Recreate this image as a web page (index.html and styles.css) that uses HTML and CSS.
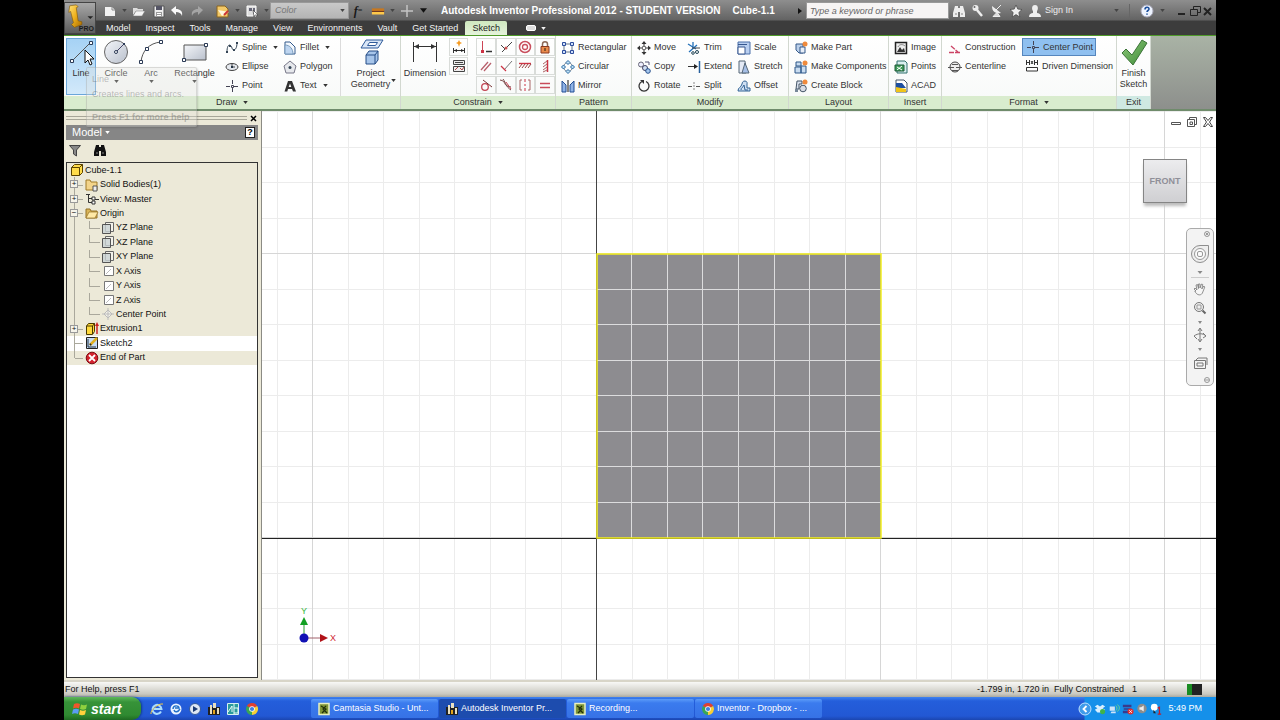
FILE: index.html
```html
<!DOCTYPE html>
<html lang="en">
<head>
<meta charset="utf-8">
<title>Autodesk Inventor Professional 2012</title>
<link rel="stylesheet" href="styles.css">
</head>
<body>
<svg class="sprite" aria-hidden="true">
  <defs>
    <linearGradient id="gold" x1="0" y1="0" x2="1" y2="1"><stop offset="0" stop-color="#ffe27a"/><stop offset=".5" stop-color="#eeb01c"/><stop offset="1" stop-color="#a86a00"/></linearGradient>
    <linearGradient id="steel" x1="0" y1="0" x2="1" y2="1"><stop offset="0" stop-color="#f4f6fa"/><stop offset="1" stop-color="#b9c0cc"/></linearGradient>
    <linearGradient id="leaf" x1="0" y1="0" x2="1" y2="1"><stop offset="0" stop-color="#8fca7c"/><stop offset="1" stop-color="#3c8a35"/></linearGradient>
  </defs>
  <symbol id="drop" viewBox="0 0 6 4"><path d="M0 0h6L3 4z" fill="currentColor"/></symbol>
  <symbol id="new" viewBox="0 0 14 14"><path d="M2 3h7l3 3v6H2z" fill="#f2f2f2"/><path d="M9 3v3h3" fill="none" stroke="#888"/></symbol>
  <symbol id="open" viewBox="0 0 14 14"><path d="M1 11V4h4l1 1h5v2H4z" fill="#ddd"/><path d="M4 7h9l-3 5H1z" fill="#f4f4f4" stroke="#777" stroke-width=".5"/></symbol>
  <symbol id="save" viewBox="0 0 14 14"><path d="M2 2h10v11H2z" fill="#eee" stroke="#555"/><path d="M4 2h6v4H4z" fill="#556"/><path d="M4 8h6v5H4z" fill="#999"/><path d="M5 9.500h4M5 11.500h4" stroke="#fff"/></symbol>
  <symbol id="undo" viewBox="0 0 14 14"><path d="M1 6l5-4v3c4 0 7 2 6 7-1-3-3-4-6-4v3z" fill="#fafafa"/></symbol>
  <symbol id="redo" viewBox="0 0 14 14"><path d="M13 6L8 2v3c-4 0-7 2-6 7 1-3 3-4 6-4v3z" fill="#a5a5a5"/></symbol>
  <symbol id="return" viewBox="0 0 14 14"><path d="M1 2h8l3 3v8H1z" fill="#f3c968" stroke="#8a6420"/><path d="M2 6l4 6 7-4" fill="#fff6dd"/><path d="M8 11l4-4" stroke="#c33" stroke-width="2"/></symbol>
  <symbol id="docsel" viewBox="0 0 14 14"><path d="M2 2h9v10H2z" fill="#ddd" stroke="#fff"/><path d="M4 4h3v3H4zM8 4h2v6H8z" fill="#667"/><path d="M8 6l5 5-3 0-1 2z" fill="#fff" stroke="#333" stroke-width=".6"/></symbol>
  <symbol id="ruler" viewBox="0 0 16 14"><path d="M1 4h14v3H1z" fill="#c8781f"/><path d="M1 8h14v3H1z" fill="#ffc94a"/><path d="M1 7.500h14" stroke="#6b2c12"/></symbol>
  <symbol id="plus" viewBox="0 0 14 14"><path d="M7 1v12M1 7h12" stroke="#c4c4c4" stroke-width="1.500"/></symbol>
  <symbol id="binoc" viewBox="0 0 14 14"><path d="M3 2h3v2h2V2h3l2 7v4H8V8H6v5H1V9z" fill="currentColor"/><path d="M3 10h2M9 10h2" stroke="#888"/></symbol>
  <symbol id="key" viewBox="0 0 14 14"><circle cx="4.500" cy="4" r="3" fill="#eee"/><circle cx="3.500" cy="3" r="1" fill="#666"/><path d="M6 6l5 6" stroke="#eee" stroke-width="2.500"/></symbol>
  <symbol id="dish" viewBox="0 0 14 14"><path d="M2 2c0 6 4 8 9 7z" fill="#eee"/><path d="M6 6l5-5M3 12.500h7l-3-4z" stroke="#eee" fill="#ddd"/></symbol>
  <symbol id="star" viewBox="0 0 14 14"><path d="M7 1l1.800 4.100 4.200.4-3.200 3 1 4.500L7 10.600 3.200 13l1-4.500L1 5.500l4.200-.4z" fill="#eee" stroke="#444" stroke-width=".7"/></symbol>
  <symbol id="user" viewBox="0 0 14 14"><path d="M7 1c4 0 3 5 2 6v2c2 0 4 1 4 4H1c0-3 2-4 4-4V7C4 6 3 1 7 1z" fill="#eee"/></symbol>
  <symbol id="help" viewBox="0 0 14 14"><circle cx="7" cy="7" r="6" fill="#eef4ff" stroke="#aab"/><path d="M5 5.500c0-3 4-3 4-.5 0 1.500-2 1.500-2 3M7 9.500v1.300" fill="none" stroke="#1b4f9c" stroke-width="1.600"/></symbol>
  <symbol id="line" viewBox="0 0 28 28"><path d="M5 23L22 6" stroke="#555" fill="none"/><path d="M3.500 21.500h3v3h-3zM22.500 3.500h3v3h-3z" fill="#fff" stroke="#2b3a55"/></symbol>
  <symbol id="circle" viewBox="0 0 28 28"><circle cx="14" cy="14" r="11.500" fill="url(#steel)" stroke="#666"/><path d="M14 14l8-8" stroke="#446"/><circle cx="14" cy="14" r="1.500" fill="#fff" stroke="#2b3a55"/><path d="M21 5h2v2h-2z" fill="#2b3a55"/></symbol>
  <symbol id="arc" viewBox="0 0 28 28"><path d="M4 24C5 13 12 5 24 4" fill="none" stroke="#555"/><path d="M2.500 22.500h3v3h-3zM22.500 2.500h3v3h-3zM8.500 9.500h3v3h-3z" fill="#fff" stroke="#2b3a55"/></symbol>
  <symbol id="rect" viewBox="0 0 28 28"><path d="M3 7h22v15H3z" fill="url(#steel)" stroke="#555"/><path d="M1.500 20.500h3v3h-3zM23.500 5.500h3v3h-3z" fill="#fff" stroke="#2b3a55"/></symbol>
  <symbol id="spline" viewBox="0 0 14 14"><path d="M2 11c0-9 4-8 5-4s5 2 5-5" fill="none" stroke="#345"/><path d="M1 10h2v2H1zM4 4h2v2H4zM8 8h2v2H8zM11 1h2v2h-2z" fill="#345"/></symbol>
  <symbol id="ellipse" viewBox="0 0 14 14"><ellipse cx="7" cy="7" rx="6" ry="3.500" fill="#e5e9ef" stroke="#444"/><path d="M7 3.500V7h3" stroke="#444" fill="none"/><path d="M6 6h2v2H6z" fill="#234"/></symbol>
  <symbol id="point" viewBox="0 0 14 14"><path d="M7.500 1v4M7.500 9v4M1 7.500h4M9 7.500h4M6.500 6.500h2v2h-2z" stroke="#445" fill="none"/></symbol>
  <symbol id="fillet" viewBox="0 0 14 14"><path d="M2 1h5l5 5v7H2z" fill="#f4f8fd" stroke="#345a8c"/><path d="M2 4c5 0 8 4 8 9H2z" fill="#bed5f0" stroke="#7799bb"/></symbol>
  <symbol id="polygon" viewBox="0 0 14 14"><path d="M7 1l6 5-2 7H3L1 6z" fill="#e6e8ec" stroke="#778"/><circle cx="7" cy="7.500" r="1.500" fill="#345"/></symbol>
  <symbol id="text" viewBox="0 0 14 14"><path d="M5 2h4l4 10.500h-3L9 10H5l-.7 2.500H1.500zM7 4.500L5.700 8h2.600z" fill="#333"/></symbol>
  <symbol id="project" viewBox="0 0 28 28"><path d="M9 2h17l-5 8H4z" fill="#d9e6f7" stroke="#2f5b9a"/><path d="M12.500 4.500h8l-2 3h-8z" fill="#fff" stroke="#2f5b9a"/><path d="M9 17l3-4h9v9l-3 4H9z" fill="#a7c5ea" stroke="#254c86"/><path d="M9 17h9v9M18 17l3-4" fill="none" stroke="#254c86"/></symbol>
  <symbol id="dimension" viewBox="0 0 28 28"><path d="M2.500 4v20M25.500 4v20M3 8.500h22" stroke="#333" fill="none"/><path d="M3 8.500l5-2.500v5zM25 8.500L20 6v5z" fill="#333"/></symbol>
  <symbol id="autodim" viewBox="0 0 14 14"><path d="M1.500 8v5M12.500 8v5M2 10.500h10" stroke="#333"/><path d="M2 10.500L5 9v3zM12 10.500L9 9v3z" fill="#222"/><path d="M7 0l1 2 2 1-2 1-1 3-1-3-2-1 2-1z" fill="#f59b22"/></symbol>
  <symbol id="showcon" viewBox="0 0 14 14"><path d="M1.500 1.500h11v4h-11zM1.500 7.500h11v5h-11z" fill="#eee" stroke="#444"/><path d="M3 3.500h8" stroke="#444"/><path d="M3 11l3-3M8 9l2 2 2-3" stroke="#a44" fill="none"/></symbol>
  <symbol id="c1" viewBox="0 0 14 14"><path d="M3.500 1v11" stroke="#cc4455"/><path d="M7 11.500h6" stroke="#333" stroke-width="1.500"/><path d="M2 10h3v3H2z" fill="#c34"/></symbol>
  <symbol id="c2" viewBox="0 0 14 14"><path d="M2 5l4 4M3 12l4-4M8 7l5-5" stroke="#444"/><circle cx="7" cy="8" r="1.500" fill="#c55"/></symbol>
  <symbol id="c3" viewBox="0 0 14 14"><circle cx="7" cy="7" r="5.500" fill="none" stroke="#c9505e" stroke-width="1.500"/><circle cx="7" cy="7" r="2.500" fill="none" stroke="#c9505e" stroke-width="1.300"/></symbol>
  <symbol id="c4" viewBox="0 0 14 14"><path d="M4.500 7V4c0-3 5-3 5 0v3" fill="none" stroke="#8d6a58" stroke-width="1.500"/><path d="M3 6.500h8V13H3z" fill="#e98a4c" stroke="#8b3b20"/><path d="M7 8v3" stroke="#642" stroke-width="1.500"/></symbol>
  <symbol id="c5" viewBox="0 0 14 14"><path d="M2 11L9 3M5 12l7-8" stroke="#b8606c" stroke-width="1.300"/></symbol>
  <symbol id="c6" viewBox="0 0 14 14"><path d="M5 11l8-9" fill="none" stroke="#777"/><path d="M2 7l5 5" stroke="#c34" stroke-width="1.300"/></symbol>
  <symbol id="c7" viewBox="0 0 14 14"><path d="M1 4.500h12" stroke="#c34" stroke-width="1.400"/><path d="M1 9l3-4M4 9l3-4M7 9l3-4M10 9l3-4" fill="none" stroke="#944"/></symbol>
  <symbol id="c8" viewBox="0 0 14 14"><path d="M9.500 1v12" stroke="#c34" stroke-width="1.500"/><path d="M9 2L5 5M9 5L5 8M9 8l-4 3M9 11l-4 2" fill="none" stroke="#a66"/></symbol>
  <symbol id="c9" viewBox="0 0 14 14"><circle cx="6" cy="9" r="3.300" fill="none" stroke="#c24452" stroke-width="1.300"/><path d="M4 2l9 7" stroke="#733"/></symbol>
  <symbol id="c10" viewBox="0 0 14 14"><path d="M1 2c7 1 2 6 11 7M4 1c3 4 3 8 8 11" fill="none" stroke="#744"/><path d="M7 4l5 7" stroke="#c45"/></symbol>
  <symbol id="c11" viewBox="0 0 14 14"><path d="M4 2H2v10h2M10 2h2v10h-2" fill="none" stroke="#a66"/><path d="M7 1v3M7 6v2M7 10v3" stroke="#c34"/></symbol>
  <symbol id="c12" viewBox="0 0 14 14"><path d="M2 5.500h10M2 9.500h10" stroke="#c84b5a" stroke-width="1.300"/></symbol>
  <symbol id="prect" viewBox="0 0 14 14"><path d="M3 3h8v8H3z" fill="none" stroke="#678"/><path d="M1.500 1.500h3v3h-3zM9.500 1.500h3v3h-3zM1.500 9.500h3v3h-3zM9.500 9.500h3v3h-3z" fill="#cfe0fb" stroke="#2c4c9c"/></symbol>
  <symbol id="pcirc" viewBox="0 0 14 14"><circle cx="7" cy="7" r="4.500" fill="none" stroke="#789"/><path d="M7 .5l2 2-2 2-2-2zM7 9.500l2 2-2 2-2-2zM2.500 5l2 2-2 2-2-2zM11.500 5l2 2-2 2-2-2z" fill="#bfe1f5" stroke="#2766a0"/></symbol>
  <symbol id="mirror" viewBox="0 0 14 14"><path d="M1 2l4 4v7H1zM13 2L9 6v7h4z" fill="#8fb3e6" stroke="#234f94"/><path d="M7 1v12" stroke="#111"/></symbol>
  <symbol id="move" viewBox="0 0 14 14"><path d="M7 2v10M2 7h10" stroke="#333"/><path d="M7 0l2.500 3h-5zM7 14l2.500-3h-5zM0 7l3-2.500v5zM14 7l-3-2.500v5z" fill="#333"/><path d="M5.500 5.500h3v3h-3z" fill="#fff" stroke="#333" stroke-width=".6"/></symbol>
  <symbol id="copy" viewBox="0 0 14 14"><circle cx="4" cy="4.500" r="2.500" fill="#eef" stroke="#667"/><circle cx="8" cy="8" r="2.500" fill="#cfe0f5" stroke="#446"/><circle cx="11" cy="11" r="2.300" fill="#a8c9ef" stroke="#26508c"/><path d="M8 2h4v3" fill="none" stroke="#557"/></symbol>
  <symbol id="rotate" viewBox="0 0 14 14"><path d="M5 2.500a5 5 0 1 0 4 0" fill="none" stroke="#333" stroke-width="1.300"/><path d="M3 1h4v4z" fill="#333"/></symbol>
  <symbol id="trim" viewBox="0 0 14 14"><path d="M1 3l8 5M2 11l8-7M6 1v7" stroke="#2370b8" stroke-width="1.300"/><path d="M5 7h8" stroke="#444"/><circle cx="10" cy="11" r="1.500" fill="none" stroke="#245"/><circle cx="6" cy="12" r="1.300" fill="none" stroke="#245"/></symbol>
  <symbol id="extend" viewBox="0 0 14 14"><path d="M1 6.500h8" stroke="#333"/><path d="M7 4l4 2.500L7 9z" fill="#222"/><path d="M12.500 1v12" stroke="#27609d" stroke-width="1.500"/></symbol>
  <symbol id="split" viewBox="0 0 14 14"><path d="M1 7.500h4M9 7.500h4" stroke="#555"/><path d="M7 3v9" stroke="#888" stroke-dasharray="2 1"/></symbol>
  <symbol id="scale" viewBox="0 0 14 14"><path d="M1 1h12v12H1z" fill="#b9cff0" stroke="#4b6fa8"/><path d="M1 6h7v7H1z" fill="#fff" stroke="#36578e"/><path d="M1 3.500h9" stroke="#36578e"/></symbol>
  <symbol id="stretch" viewBox="0 0 14 14"><path d="M2 1h6l1 12H2z" fill="#e4eaf5" stroke="#567"/><path d="M8 3l4 10H5z" fill="#a6bfe6" stroke="#567"/></symbol>
  <symbol id="offset" viewBox="0 0 14 14"><path d="M1 12c0-4 3-3 4-7 0-4 6-4 5 0l0 4h3v3z" fill="#cfe0f3" stroke="#316294"/><path d="M4 11c0-3 2-2 3-5l1 5h3" fill="none" stroke="#316294"/></symbol>
  <symbol id="mkpart" viewBox="0 0 14 14"><path d="M2 3h7v9H5L2 9z" fill="#bcd0ea" stroke="#355989"/><path d="M6 6h5v6H6z" fill="#e7eef8" stroke="#355989"/><circle cx="11" cy="3" r="2.500" fill="#ef8a3c"/></symbol>
  <symbol id="mkcomp" viewBox="0 0 14 14"><path d="M2 2h5v4H2zM1 7h6v6H1zM7 6h5v7H7z" fill="#c9dcf0" stroke="#2d5688"/><circle cx="11" cy="3" r="2.500" fill="#ef8a3c"/></symbol>
  <symbol id="block" viewBox="0 0 14 14"><path d="M3 2h5v3H5v5H2z" fill="#d8e0ec" stroke="#456"/><circle cx="9" cy="9.500" r="3.300" fill="#d9dde6" stroke="#456"/><path d="M1 10h3v3H1z" fill="#789"/><circle cx="11" cy="3" r="2.500" fill="#ef8a3c"/></symbol>
  <symbol id="image" viewBox="0 0 14 14"><path d="M1.500 1.500h11v11h-11z" fill="#eee" stroke="#222" stroke-width="1.500"/><path d="M3 11l3-5 2 3 2-2 1 4z" fill="#333"/><path d="M4 6c1-3 5-3 7-1" fill="none" stroke="#888"/></symbol>
  <symbol id="points" viewBox="0 0 14 14"><path d="M3 1h8l2 2v10H3z" fill="#d9eff0" stroke="#30706c"/><path d="M1 5h9v6H1z" fill="#3f9b5a" stroke="#1f5a38"/><path d="M3 7l5 3M8 6l-5 4" stroke="#fff"/></symbol>
  <symbol id="acad" viewBox="0 0 14 14"><path d="M2 1h8l3 3v9H2z" fill="#fff" stroke="#456"/><path d="M2 4h6l4 5H2z" fill="#1d4fa0"/><path d="M2 8l10 2v3H2z" fill="#f0c419"/></symbol>
  <symbol id="constr" viewBox="0 0 14 14"><path d="M1 11.500h12M3 5l7 6" stroke="#c46" stroke-width="1.300" stroke-dasharray="5 1"/></symbol>
  <symbol id="cline" viewBox="0 0 14 14"><circle cx="7" cy="7" r="5" fill="#eee" stroke="#444"/><path d="M0 7.500h6M8 7.500h6M4 4.500h6M4 10.500h6" stroke="#555"/></symbol>
  <symbol id="driven" viewBox="0 0 14 14"><path d="M1.500 1v5M4.500 1v5M2 3.500h2M6 2l2 3M8 2L6 5M9.500 1v5M12.500 1v5M10 3.500h2" stroke="#333" fill="none"/><path d="M1.500 12V8.500h11V12z" fill="#fff" stroke="#333"/></symbol>
  <symbol id="tick" viewBox="0 0 28 28"><path d="M2 15l4-4 6 6L22 2l5 3-14 22z" fill="url(#leaf)" stroke="#3c7438"/></symbol>
  <symbol id="part" viewBox="0 0 14 14"><path d="M1.500 4.500l3-3h8v8l-3 3h-8z" fill="#ffdc4a" stroke="#5b4300"/><path d="M1.500 4.500h8v8M9.500 4.500l3-3" fill="none" stroke="#5b4300"/></symbol>
  <symbol id="folders" viewBox="0 0 14 14"><path d="M1 2h4l1 2h6v8H1z" fill="#f3d48a" stroke="#a07a28"/><path d="M8 8h4v5H8z" fill="#eee" stroke="#555"/></symbol>
  <symbol id="view" viewBox="0 0 14 14"><path d="M1 2.500h4M3.500 2v8.500H7M3.500 6.500H7" stroke="#333" fill="none"/><path d="M7 5h3v3H7zM7 9h3v3H7z" fill="#fff" stroke="#333"/><path d="M10 7.500h4" stroke="#333"/></symbol>
  <symbol id="folder" viewBox="0 0 14 14"><path d="M1 3h4l1 2h6v7H1z" fill="#d9b458" stroke="#947024"/><path d="M4 6h9l-3 6H1z" fill="#ffe9a6" stroke="#947024" stroke-width=".7"/></symbol>
  <symbol id="plane" viewBox="0 0 14 14"><path d="M4.500 1.500h8v9h-8z" fill="#f3f2ea" stroke="#666"/><path d="M1.500 3.500h8v9h-8z" fill="#c9d2d4" fill-opacity=".8" stroke="#555"/></symbol>
  <symbol id="axis" viewBox="0 0 14 14"><path d="M3.500 2.500h9v9h-9z" fill="#fff" stroke="#777"/><path d="M5 10l5-5" stroke="#bbb"/></symbol>
  <symbol id="cpoint" viewBox="0 0 14 14"><path d="M7 3l4 4-4 4-4-4z" fill="#f4f2ea" stroke="#bbb"/><path d="M7 1v12M1 7h12" stroke="#bbb"/></symbol>
  <symbol id="extr" viewBox="0 0 14 14"><path d="M1.500 4l2-2.500h6v8l-2 3h-6z" fill="#ffd93b" stroke="#4a3a00"/><path d="M1.500 4h6v8M7.500 4l2-2.500" fill="none" stroke="#4a3a00"/><path d="M12 3v9" stroke="#c22" stroke-width="1.500"/><path d="M12 0l2 4h-4z" fill="#c22"/></symbol>
  <symbol id="sketch" viewBox="0 0 14 14"><path d="M1.500 1.500h11v11h-11z" fill="#c6dcf5" stroke="#222"/><path d="M3 3v8h8" fill="none" stroke="#234"/><path d="M5 9l7-7" stroke="#e0b020" stroke-width="2.500"/><path d="M5 9l1-1" stroke="#222" stroke-width="2"/></symbol>
  <symbol id="end" viewBox="0 0 14 14"><circle cx="7" cy="7" r="5.800" fill="#d2232e" stroke="#7d0d14"/><path d="M4 4l6 6M10 4l-6 6" stroke="#fff" stroke-width="1.800"/></symbol>
  <symbol id="funnel" viewBox="0 0 14 14"><path d="M1.500 2.500h11L8.500 7v6l-3-2V7z" fill="#888" stroke="#444"/></symbol>
  <symbol id="camtasia" viewBox="0 0 14 14"><path d="M2 1.500h10v11H2z" fill="#7d9435" stroke="#e8efc0" stroke-width="1.500"/><path d="M4 4l5 3-4 4M9 4L6 7l4 4" fill="none" stroke="#20300a" stroke-width="1.200"/></symbol>
  <symbol id="inventor" viewBox="0 0 14 14"><path d="M1 5h12v8H1z" fill="#222"/><path d="M3 3h2v9H3zM6 1h3v5H6zM10 6h2v6h-2z" fill="#e8dfc0"/><path d="M6 8h2v4H6z" fill="#e2a41c"/></symbol>
  <symbol id="chrome" viewBox="0 0 14 14"><path d="M7 7L1.800 4A6 6 0 0 1 12.200 4z" fill="#e0402e"/><path d="M7 7l5.200-3A6 6 0 0 1 7 13z" fill="#f7cf33"/><path d="M7 7v6A6 6 0 0 1 1.800 4z" fill="#3aa655"/><circle cx="7" cy="7" r="2.800" fill="#fff"/><circle cx="7" cy="7" r="2.100" fill="#3f7fe0"/></symbol>
  <symbol id="ie" viewBox="0 0 14 14"><path d="M11 9.500A4.500 4.500 0 1 1 11.500 7H4" fill="none" stroke="#a9dcff" stroke-width="2"/><path d="M1 12C0 9 8 1 13 2" fill="none" stroke="#f5c842"/></symbol>
  <symbol id="outlook" viewBox="0 0 14 14"><circle cx="7" cy="7" r="5.500" fill="#e9f2ff"/><path d="M4 7c0-4 6-4 6-1H6m-1 2c1 3 4 2 6-1" fill="none" stroke="#2470c8" stroke-width="1.400"/></symbol>
  <symbol id="media" viewBox="0 0 14 14"><circle cx="7" cy="7" r="5.500" fill="#dfe8f4" stroke="#345a9c"/><path d="M5 4l5 3-5 3z" fill="#1c3b74"/></symbol>
  <symbol id="graph" viewBox="0 0 14 14"><path d="M1.500 1.500h11v11h-11z" fill="#2a9b9b" stroke="#d6f0ee"/><path d="M2 10L6 4v6M8 2v10M8 6h4v5H8" fill="none" stroke="#eafcf8"/></symbol>
  <symbol id="winlogo" viewBox="0 0 16 16"><path d="M2 3c2-1 4-1 6 0L7 7.500c-2-1-4-1-6 0z" fill="#f0562b"/><path d="M9 3.500c2 1 4 1 6 0L14 8c-2 1-4 1-6 0z" fill="#8fd13f"/><path d="M1 8.500c2-1 4-1 6 0L6 13c-2-1-4-1-6 0z" fill="#5b9cf5"/><path d="M8 9c2 1 4 1 6 0l-1 4.500c-2 1-4 1-6 0z" fill="#ffd23c"/></symbol>
</svg>

<div class="app">
  <header class="head">
    <button class="logo" aria-label="Application menu">
      <svg viewBox="0 0 32 32"><path d="M5 3l7-1 2 2-2 1 2 14 4 1v3l-8 3-3-3 2-2-3-12-2 1z" fill="url(#gold)" stroke="#7c5200" stroke-width=".6"/><path d="M24 14h6l-3 3z" fill="#222"/></svg>
      <span>PRO</span>
    </button>
    <div class="head-rows">
      <div class="titlebar">
        <div class="quick">
          <button class="q22" aria-label="New"><svg><use href="#new"/></svg></button>
          <button class="q7" aria-label="New options"><svg class="dr"><use href="#drop"/></svg></button>
          <button class="q22" aria-label="Open"><svg><use href="#open"/></svg></button>
          <button class="q18" aria-label="Save"><svg><use href="#save"/></svg></button>
          <button class="q18" aria-label="Undo"><svg><use href="#undo"/></svg></button>
          <button class="q22" aria-label="Redo"><svg><use href="#redo"/></svg></button>
          <button class="q22 group" aria-label="Return"><svg><use href="#return"/></svg></button>
          <button class="q7" aria-label="Return options"><svg class="dr"><use href="#drop"/></svg></button>
          <button class="q22" aria-label="Select"><svg><use href="#docsel"/></svg></button>
          <button class="q7" aria-label="Select options"><svg class="dr"><use href="#drop"/></svg></button>
          <span class="color-wrap"><select class="color" aria-label="Color"><option>Color</option></select><svg class="dr"><use href="#drop"/></svg></span>
          <button class="q18 fx" aria-label="Parameters">f<sub>=</sub></button>
          <button class="q22" aria-label="Measure"><svg><use href="#ruler"/></svg></button>
          <button class="q7" aria-label="Measure options"><svg class="dr"><use href="#drop"/></svg></button>
          <button class="q22" aria-label="Add"><svg><use href="#plus"/></svg></button>
          <button class="q7 more" aria-label="Customize"><svg class="dr"><use href="#drop"/></svg></button>
        </div>
        <h1 class="title">Autodesk Inventor Professional 2012 - STUDENT VERSION</h1>
        <span class="title">Cube-1.1</span>
        <div class="info">
          <span class="play"></span>
          <input class="search" type="text" placeholder="Type a keyword or phrase" aria-label="Search">
          <button aria-label="Search"><svg><use href="#binoc"/></svg></button>
          <button aria-label="Key"><svg><use href="#key"/></svg></button>
          <button aria-label="Communication"><svg><use href="#dish"/></svg></button>
          <button aria-label="Favorites"><svg><use href="#star"/></svg></button>
          <button aria-label="Account"><svg><use href="#user"/></svg></button>
          <button class="signin">Sign In<svg class="dr"><use href="#drop"/></svg></button>
          <button class="helpb" aria-label="Help"><svg><use href="#help"/></svg><svg class="dr"><use href="#drop"/></svg></button>
          <button class="win" aria-label="Minimize"><svg viewBox="0 0 12 12"><path d="M2 9h7" stroke="#222" stroke-width="2"/></svg></button>
          <button class="win" aria-label="Restore"><svg viewBox="0 0 12 12"><path d="M4.500 4V1.500h7v6H9M1.500 4.500h7v6h-7z" fill="none" stroke="#222"/></svg></button>
          <button class="win" aria-label="Close"><svg viewBox="0 0 12 12"><path d="M2 3l7 7M9 3l-7 7" stroke="#222" stroke-width="2"/></svg></button>
        </div>
      </div>
      <nav class="tabs">
        <button>Model</button><button>Inspect</button><button>Tools</button><button>Manage</button><button>View</button><button>Environments</button><button>Vault</button><button>Get Started</button><button class="on">Sketch</button>
        <button class="rib" aria-label="Ribbon display"><i></i><svg class="dr"><use href="#drop"/></svg></button>
      </nav>
    </div>
  </header>

  <section class="ribbon">
    <div class="panel draw">
      <div class="tools">
        <button class="big sel"><svg><use href="#line"/></svg>Line</button>
        <button class="big w40"><svg><use href="#circle"/></svg>Circle<svg class="dr"><use href="#drop"/></svg></button>
        <button class="big w30"><svg><use href="#arc"/></svg>Arc<svg class="dr"><use href="#drop"/></svg></button>
        <button class="big w56"><svg><use href="#rect"/></svg>Rectangle<svg class="dr"><use href="#drop"/></svg></button>
        <div class="list w58">
          <button><svg><use href="#spline"/></svg>Spline<svg class="dr"><use href="#drop"/></svg></button>
          <button><svg><use href="#ellipse"/></svg>Ellipse</button>
          <button><svg><use href="#point"/></svg>Point</button>
        </div>
        <div class="list w56">
          <button><svg><use href="#fillet"/></svg>Fillet<svg class="dr"><use href="#drop"/></svg></button>
          <button><svg><use href="#polygon"/></svg>Polygon</button>
          <button><svg><use href="#text"/></svg>Text<svg class="dr"><use href="#drop"/></svg></button>
        </div>
        <button class="big project"><svg><use href="#project"/></svg>Project Geometry<svg class="dr"><use href="#drop"/></svg></button>
      </div>
      <h2>Draw <svg class="dr"><use href="#drop"/></svg></h2>
      <div class="ghost"><p>Line</p><p>Creates lines and arcs.</p><p class="f1">Press F1 for more help</p></div>
      <svg class="pointer" viewBox="0 0 12 18"><path d="M1 1v13l3-3 2 5 2-1-2-5h4z" fill="#fff" stroke="#111"/></svg>
    </div>
    <div class="panel constrain">
      <div class="tools">
        <button class="big dim"><svg><use href="#dimension"/></svg>Dimension</button>
        <div class="boxes one">
          <button aria-label="Automatic dimension"><svg><use href="#autodim"/></svg></button>
          <button aria-label="Show constraints"><svg><use href="#showcon"/></svg></button>
        </div>
        <div class="boxes four">
          <button aria-label="Coincident"><svg><use href="#c1"/></svg></button>
          <button aria-label="Collinear"><svg><use href="#c2"/></svg></button>
          <button aria-label="Concentric"><svg><use href="#c3"/></svg></button>
          <button aria-label="Fix"><svg><use href="#c4"/></svg></button>
          <button aria-label="Parallel"><svg><use href="#c5"/></svg></button>
          <button aria-label="Perpendicular"><svg><use href="#c6"/></svg></button>
          <button aria-label="Horizontal"><svg><use href="#c7"/></svg></button>
          <button aria-label="Vertical"><svg><use href="#c8"/></svg></button>
          <button aria-label="Tangent"><svg><use href="#c9"/></svg></button>
          <button aria-label="Smooth"><svg><use href="#c10"/></svg></button>
          <button aria-label="Symmetric"><svg><use href="#c11"/></svg></button>
          <button aria-label="Equal"><svg><use href="#c12"/></svg></button>
        </div>
      </div>
      <h2>Constrain <svg class="dr"><use href="#drop"/></svg></h2>
    </div>
    <div class="panel pattern">
      <div class="tools"><div class="list">
        <button><svg><use href="#prect"/></svg>Rectangular</button>
        <button><svg><use href="#pcirc"/></svg>Circular</button>
        <button><svg><use href="#mirror"/></svg>Mirror</button>
      </div></div>
      <h2>Pattern</h2>
    </div>
    <div class="panel modify">
      <div class="tools">
        <div class="list w50">
          <button><svg><use href="#move"/></svg>Move</button>
          <button><svg><use href="#copy"/></svg>Copy</button>
          <button><svg><use href="#rotate"/></svg>Rotate</button>
        </div>
        <div class="list w50">
          <button><svg><use href="#trim"/></svg>Trim</button>
          <button><svg><use href="#extend"/></svg>Extend</button>
          <button><svg><use href="#split"/></svg>Split</button>
        </div>
        <div class="list">
          <button><svg><use href="#scale"/></svg>Scale</button>
          <button><svg><use href="#stretch"/></svg>Stretch</button>
          <button><svg><use href="#offset"/></svg>Offset</button>
        </div>
      </div>
      <h2>Modify</h2>
    </div>
    <div class="panel layout">
      <div class="tools"><div class="list">
        <button><svg><use href="#mkpart"/></svg>Make Part</button>
        <button><svg><use href="#mkcomp"/></svg>Make Components</button>
        <button><svg><use href="#block"/></svg>Create Block</button>
      </div></div>
      <h2>Layout</h2>
    </div>
    <div class="panel insert">
      <div class="tools"><div class="list">
        <button><svg><use href="#image"/></svg>Image</button>
        <button><svg><use href="#points"/></svg>Points</button>
        <button><svg><use href="#acad"/></svg>ACAD</button>
      </div></div>
      <h2>Insert</h2>
    </div>
    <div class="panel format">
      <div class="tools">
        <div class="list w74">
          <button><svg><use href="#constr"/></svg>Construction</button>
          <button><svg><use href="#cline"/></svg>Centerline</button>
        </div>
        <div class="list">
          <button class="active"><svg><use href="#point"/></svg>Center Point</button>
          <button class="in"><svg><use href="#driven"/></svg>Driven Dimension</button>
        </div>
      </div>
      <h2>Format <svg class="dr"><use href="#drop"/></svg></h2>
    </div>
    <div class="panel exit">
      <div class="tools"><button class="big"><svg><use href="#tick"/></svg>Finish Sketch</button></div>
      <h2>Exit</h2>
    </div>
  </section>

  <main class="work">
    <aside class="browser">
      <div class="grip"><i></i><button aria-label="Close browser"><svg viewBox="0 0 8 8"><path d="M1 2l5 5M6 2L1 7" stroke="#000" stroke-width="1.500"/></svg></button></div>
      <div class="bhead"><button>Model<svg class="dr"><use href="#drop"/></svg></button><button class="bhelp">?</button></div>
      <div class="bbar"><button aria-label="Filter"><svg><use href="#funnel"/></svg></button><button aria-label="Find"><svg><use href="#binoc"/></svg></button></div>
      <div class="tree">
        <ul>
          <li class="l0"><svg><use href="#part"/></svg>Cube-1.1</li>
          <li class="l1"><b>+</b><svg><use href="#folders"/></svg>Solid Bodies(1)</li>
          <li class="l1"><b>+</b><svg><use href="#view"/></svg>View: Master</li>
          <li class="l1"><b>−</b><svg><use href="#folder"/></svg>Origin</li>
          <li class="l2"><svg><use href="#plane"/></svg>YZ Plane</li>
          <li class="l2"><svg><use href="#plane"/></svg>XZ Plane</li>
          <li class="l2"><svg><use href="#plane"/></svg>XY Plane</li>
          <li class="l2"><svg><use href="#axis"/></svg>X Axis</li>
          <li class="l2"><svg><use href="#axis"/></svg>Y Axis</li>
          <li class="l2"><svg><use href="#axis"/></svg>Z Axis</li>
          <li class="l2 last"><svg><use href="#cpoint"/></svg>Center Point</li>
          <li class="l1"><b>+</b><svg><use href="#extr"/></svg>Extrusion1</li>
          <li class="l1 cur"><svg><use href="#sketch"/></svg>Sketch2</li>
          <li class="l1 last"><svg><use href="#end"/></svg>End of Part</li>
        </ul>
      </div>
    </aside>
    <section class="canvas">
      <svg class="scene" viewBox="-477 -285 954 569" preserveAspectRatio="xMidYMid slice">
        <defs>
          <pattern id="minor" x="-143" y="-143" width="71" height="71" patternUnits="userSpaceOnUse"><path d="M.5 0v71M36.500 0v71M0 .5h71M0 36.500h71" stroke="#ececec" fill="none"/></pattern>
          <pattern id="major" x="-143" y="-143" width="284" height="284" patternUnits="userSpaceOnUse"><path d="M.5 0v284M0 .5h284" stroke="#d6d6d6" fill="none"/></pattern>
        </defs>
        <rect x="-600" y="-400" width="1200" height="800" fill="url(#minor)"/>
        <rect x="-600" y="-400" width="1200" height="800" fill="url(#major)"/>
        <path d="M-142.500-400v800" stroke="#444"/>
        <path d="M-600 142.500h1200" stroke="#222"/>
        <path d="M-142-142h284v284h-284z" fill="#8d8c90"/>
        <path d="M-107.500-142v284M-71.500-142v284M-36.500-142v284M-.5-142v284M35.500-142v284M70.500-142v284M106.500-142v284M-142-106.500h284M-142-71.500h284M-142-35.500h284M-142-.5h284M-142 35.500h284M-142 70.500h284M-142 106.500h284" stroke="#dcdcde"/>
        <path d="M-142-142h284v284h-284z" fill="none" stroke="#f4f01c" stroke-width="1.500"/>
      </svg>
      <div class="docwin">
        <button aria-label="Minimize document"><svg viewBox="0 0 12 12"><path d="M1.500 6.500h9v2h-9z" fill="#fff" stroke="#555"/></svg></button>
        <button aria-label="Restore document"><svg viewBox="0 0 12 12"><path d="M3.500 3V1.500h7v7H9M1.500 3.500h7v7h-7zM4 6h2.500v2.500H4z" fill="none" stroke="#555"/></svg></button>
        <button aria-label="Close document"><svg viewBox="0 0 12 12"><path d="M1.500 1.500h2l2.500 3 2.500-3h2L7.500 6l3 4.500h-2L6 7.500l-2.500 3h-2L4.500 6z" fill="#fff" stroke="#444"/></svg></button>
      </div>
      <button class="cube">FRONT</button>
      <div class="navbar">
        <svg class="full" viewBox="1 1 26 156" fill="none" stroke="#999">
          <circle cx="21" cy="6" r="2.500"/><path d="M19.500 4.500l3 3M22.500 4.500l-3 3"/>
          <path d="M14 17.500h8.500v8.500a8.500 8.500 0 1 1-8.500-8.500z" fill="#eee" stroke="#8e8e8e"/><circle cx="14" cy="26" r="5.500" fill="#fafafa"/><rect x="11.500" y="23.500" width="5" height="5" rx="1.500"/>
          <path d="M11.500 43h5L14 46z" fill="#888" stroke="none"/><path d="M5 49.500h18" stroke="#ccc"/>
          <path d="M10 63l-2-2 1-1 2 2-1-5 1.500-.5 1 4V56h1.500v4l1.500-4 1.300.5-1 4.500 2-3 1 1-2 5c-1 4-6 4-8-1z" fill="#f6f6f6" stroke="#777" stroke-width=".8"/>
          <circle cx="13" cy="79" r="4.500" fill="#eee" stroke="#777"/><path d="M16.500 82.500l3 3" stroke="#666" stroke-width="2"/><path d="M11 77h4v4h-4z"/>
          <path d="M12 93h4l-2 3z" fill="#888" stroke="none"/>
          <path d="M14 101v12M8 108c4-3 9-3 12 0M20 108l-3-3m3 3l-3 2M8 108l3 3M12 103l2-3 2 3M12 111l2 3 2-3" stroke="#777"/>
          <path d="M12 120h4l-2 3z" fill="#888" stroke="none"/>
          <path d="M8.500 132.500h11v8h-11zM10 132l2-2h9v7M11 135h6v3h-6z" stroke="#777"/>
          <circle cx="21" cy="152" r="2.500"/><path d="M19 152h4"/>
        </svg>
      </div>
      <svg class="triad" viewBox="0 0 44 44"><path d="M10 32V18" stroke="#2b9b33"/><path d="M10 11l4 8H6z" fill="#12a022"/><path d="M10 32h16" stroke="#a0606a"/><path d="M34 32l-8-4v8z" fill="#b11218"/><circle cx="10" cy="32" r="4.500" fill="#1111b4"/><text x="7" y="8" fill="#35b83d">Y</text><text x="36" y="35" fill="#d02632">X</text></svg>
    </section>
  </main>

  <footer class="status">
    <span>For Help, press F1</span>
    <span class="coords">-1.799 in, 1.720 in</span><span class="cell c-full">Fully Constrained</span><span class="cell">1</span><span class="cell">1</span><i class="meter"></i>
  </footer>

  <div class="taskbar">
    <button class="start"><svg><use href="#winlogo"/></svg>start</button>
    <div class="launch">
      <button aria-label="Internet Explorer"><svg><use href="#ie"/></svg></button>
      <button aria-label="Outlook"><svg><use href="#outlook"/></svg></button>
      <button aria-label="Media Player"><svg><use href="#media"/></svg></button>
      <button aria-label="Inventor"><svg><use href="#inventor"/></svg></button>
      <button aria-label="Graph"><svg><use href="#graph"/></svg></button>
      <button aria-label="Chrome"><svg><use href="#chrome"/></svg></button>
    </div>
    <div class="tasks">
      <button><svg><use href="#camtasia"/></svg>Camtasia Studio - Unt...</button>
      <button class="cur"><svg><use href="#inventor"/></svg>Autodesk Inventor Pr...</button>
      <button><svg><use href="#camtasia"/></svg>Recording...</button>
      <button><svg><use href="#chrome"/></svg>Inventor - Dropbox - ...</button>
    </div>
    <div class="tray">
      <button class="chev" aria-label="Show hidden icons"><svg viewBox="0 0 14 14"><circle cx="7" cy="7" r="6" fill="#3f9bea" stroke="#bfe2ff"/><path d="M8.500 4l-3 3 3 3" fill="none" stroke="#fff" stroke-width="1.800"/></svg></button>
      <svg viewBox="0 0 14 14"><path d="M1 4l3-2 3 2 3-2 3 2-3 2 3 2-3 3H4L1 8l3-2z" fill="#d8efff"/><circle cx="10" cy="10" r="3" fill="#3fb34a"/></svg>
      <svg viewBox="0 0 14 14"><path d="M2 4h6v5H2zM4 10h5v2H3z" fill="#cfe4f7"/><path d="M9 3c2 2 2 4 0 6M11 2c3 2 3 5 0 8" fill="none" stroke="#7de07a"/></svg>
      <svg viewBox="0 0 14 14"><path d="M1 2h10v3H1zM2 6h9v2H2zM1 9h9v3H1z" fill="#3a3a8c"/><circle cx="10" cy="10" r="3.500" fill="#e23030"/><path d="M8.500 8.500l3 3M11.500 8.500l-3 3" stroke="#fff"/></svg>
      <svg viewBox="0 0 14 14"><circle cx="7" cy="6.500" r="5.500" fill="#8d8d8d"/><path d="M4 5h2l3-2v7L6 8H4z" fill="#eee"/></svg>
      <svg viewBox="0 0 14 14"><circle cx="5" cy="5" r="4" fill="#fff"/><path d="M4 8v4h3z" fill="#222"/><path d="M9 6l2-1v8M9 13h4" fill="none" stroke="#c21c2a" stroke-width="1.500"/></svg>
      <time>5:49 PM</time>
    </div>
  </div>
</div>
</body>
</html>
```

FILE: styles.css
```css
* { box-sizing: border-box; }
body {
  margin: 0;
  background: #000;
  color: #222;
  font: 9px/11px "Liberation Sans", Arial, sans-serif;
}
button, input, select { font: inherit; color: inherit; }
button { margin: 0; padding: 0; border: 0; background: none; white-space: nowrap; }
svg { width: 14px; height: 14px; flex: none; display: block; }
svg.dr { width: 5px; height: 3px; }
h1, h2, p, ul { margin: 0; padding: 0; font: inherit; }
.sprite { position: absolute; width: 0; height: 0; }

.app { display: flex; flex-direction: column; height: 100vh; margin: 0 5%; overflow: hidden; background: #ece9d8; }

/* Title bar and tabs */
.head { display: flex; background: linear-gradient(#8e8e8e, #636363 20px, #3c3c3c 21px); border-bottom: 1px solid #4f9a2a; height: 36px; flex: none; }
.logo { position: relative; width: 32px; height: 32px; margin-top: 2px; background: linear-gradient(#a8a8a8, #5c5c5c); border: 1px solid #444; }
.logo svg { width: 100%; height: 100%; }
.logo span { position: absolute; right: 1px; bottom: 0; font-size: 7px; line-height: 9px; font-weight: bold; color: #1c1c1c; }
.head-rows { flex: 1; min-width: 0; display: flex; flex-direction: column; }
.titlebar { display: flex; align-items: center; height: 21px; color: #fff; }
.quick { display: flex; align-items: center; padding-left: 3px; }
.quick button { display: flex; align-items: center; justify-content: center; color: #444; height: 16px; }
.quick .group { margin-left: 4px; }
.q22 { width: 22px; }
.q18 { width: 18px; }
.q7 { width: 7px; }
.quick .more { width: 11px; color: #111; }
.more svg.dr { width: 7px; height: 5px; }
.quick .fx { color: #181818; font: italic bold 12px/12px "Liberation Serif", serif; }
.fx sub { font-size: 8px; }
.color-wrap { display: flex; align-items: center; position: relative; color: #444; }
.color { appearance: none; width: 79px; height: 17px; padding: 0 4px; border: 1px solid #999; border-radius: 0; background: linear-gradient(#c9c9c9, #b4b4b4); color: #777; font-style: italic; }
.color-wrap svg { position: absolute; right: 4px; top: 7px; }
.title { font-weight: bold; font-size: 10px; white-space: nowrap; margin-left: 12px; }
.info { display: flex; align-items: center; margin-left: auto; padding-right: 2px; color: #eee; }
.info button { width: 19px; display: flex; align-items: center; justify-content: center; }
.play { border: 3px solid transparent; border-left: 4px solid #111; border-right: 0; margin-right: 4px; }
.search { width: 143px; height: 17px; padding: 0 3px; border: 1px solid #999; background: #f6f4f4; font-style: italic; color: #555; }
.search::placeholder { color: #666; opacity: 1; }
.info .signin { width: 85px; justify-content: space-between; padding: 0 10px 0 1px; }
.signin .dr, .helpb .dr { color: #444; }
.info .helpb { width: 46px; border-left: 1px solid #666; gap: 6px; }
.info .win { width: 13px; }
.win svg { width: 12px; height: 12px; }
.tabs { display: flex; height: 14px; padding-left: 2px; color: #f4f4f4; align-items: stretch; }
.tabs button { padding: 0 7px 0 8px; }
.tabs .on { background: linear-gradient(#cfe8bf, #e6f3dc); color: #222; border-radius: 2px 2px 0 0; padding: 0 7px; }
.tabs .rib { display: flex; align-items: center; gap: 5px; margin-left: 11px; }
.rib i { width: 10px; height: 6px; background: #ddd; border: 1px solid #fff; border-radius: 2px; }

/* Ribbon */
.ribbon { display: flex; flex: none; background: linear-gradient(#a9b3a5, #8d8f8c); border-bottom: 2px solid #6f8b6b; }
.panel { position: relative; display: flex; flex-direction: column; background: linear-gradient(#fff, #f7f9f8); border-right: 1px solid #d2d8d0; }
.tools { display: flex; height: 60px; padding: 2px 0 0; }
.panel h2 { display: flex; align-items: center; justify-content: center; gap: 6px; height: 13px; background: #d9ecce; color: #333; }
.draw { width: 337px; }
.draw .tools { padding-left: 2px; }
.constrain { width: 155px; }
.constrain .tools { padding-left: 1px; }
.pattern { width: 76px; }
.modify { width: 157px; }
.layout { width: 100px; }
.insert { width: 53px; }
.format { width: 175px; }
.exit { width: 34px; }
.exit h2 { background: #cfe9e2; }
.pattern .tools, .modify .tools, .layout .tools, .insert .tools { padding-left: 5px; }
.format .tools { padding-left: 6px; }
.big { display: flex; flex-direction: column; align-items: center; white-space: normal; color: #333; }
.big > svg:first-child { width: 28px; height: 28px; margin-bottom: 2px; }
.big .dr { margin-top: 1px; }
.sel { width: 30px; height: 57px; background: linear-gradient(#a5d2f5, #d3e9fa); outline: 1px solid #6aa6da; outline-offset: -1px; }
.w30 { width: 30px; }
.w40 { width: 40px; }
.w50 { width: 50px; }
.w56 { width: 57px; }
.w58 { width: 58px; }
.w74 { width: 74px; }
.list { display: flex; flex-direction: column; flex: none; }
.list button { display: flex; align-items: center; gap: 3px; height: 19px; color: #333; }
.list .dr { margin-left: 3px; }
.draw .list:nth-of-type(1) { margin-left: 2px; }
.project { position: relative; flex: 1; border-left: 1px solid #dcdcdc; padding: 0 8px; }
.project .dr { position: absolute; right: 4px; top: 40px; }
.dim { width: 46px; }
.boxes { display: grid; align-content: start; gap: 1px 0; }
.boxes.one { margin-left: 1px; margin-right: 8px; }
.boxes.four { grid-template-columns: repeat(4, 1fr); flex: 1; }
.boxes button { display: flex; align-items: center; justify-content: center; height: 18px; min-width: 19px; border: 1px solid #d9dcd9; }
.format .list .active { align-self: flex-start; height: 18px; padding: 0 2px 0 3px; background: #8fc0f0; border: 1px solid #5586bd; }
.format .list .in { padding-left: 3px; height: 20px; }
.ghost { position: absolute; z-index: 2; left: 22px; top: 31px; width: 111px; height: 60px; padding: 6px 5px; border: 1px solid rgba(130, 130, 130, .25); border-radius: 2px; background: rgba(225, 225, 218, .3); box-shadow: 1px 1px 2px rgba(0, 0, 0, .15); color: rgba(110, 110, 110, .45); white-space: nowrap; display: flex; flex-direction: column; gap: 4px; }
.ghost .f1 { font-weight: bold; margin-top: 8px; }
.pointer { position: absolute; z-index: 3; left: 20px; top: 13px; width: 12px; height: 18px; }

/* Workspace */
.work { display: flex; flex: 1; min-height: 0; border-bottom: 2px solid #d8d5c8; }
.browser { width: 198px; flex: none; display: flex; flex-direction: column; padding: 0 3px 2px 2px; border-right: 1px solid #8b8b84; }
.grip { display: flex; align-items: center; gap: 3px; height: 14px; }
.grip i { flex: 1; height: 4px; border: 1px solid #a8a698; border-width: 1px 0; }
.grip svg { width: 8px; height: 8px; }
.bhead { display: flex; align-items: center; justify-content: space-between; height: 15px; padding: 0 3px 0 6px; background: #868686; color: #fff; font-size: 11px; }
.bhead button { display: flex; align-items: center; gap: 3px; }
.bhead .bhelp { width: 10px; height: 11px; justify-content: center; background: #fff; border: 1px solid #222; color: #000; font-size: 9px; font-weight: bold; }
.bbar { display: flex; align-items: center; gap: 11px; height: 22px; padding: 0 0 2px 2px; color: #111; }
.tree { flex: 1; border: 1px solid #333; background: #fff; overflow: hidden; }
.tree ul { display: grid; grid-template-rows: repeat(14, 1fr); height: 202px; background: #ece9d8; list-style: none; }
.tree li { display: flex; align-items: center; gap: 1px; color: #111; padding-left: 3px; position: relative; min-height: 0; }
.tree .l1 { padding-left: 18px; }
.tree .l2 { padding-left: 34px; }
.tree .l1::before, .tree .l2::before { content: ""; position: absolute; left: 7px; top: 0; height: 100%; border-left: 1px solid #aaa89c; }
.tree .l1::after { content: ""; position: absolute; left: 8px; width: 8px; top: 50%; border-top: 1px solid #aaa89c; }
.tree .l2::after { content: ""; position: absolute; left: 22px; width: 10px; top: 0; height: 50%; border: 1px solid #aaa89c; border-width: 0 0 1px 1px; }
.tree .l1.last::before { height: 50%; }
.tree .cur { background: #fff; }
.tree b { position: absolute; z-index: 1; left: 3px; top: 3px; width: 8px; height: 8px; border: 1px solid #999; background: #f6f4ea; font: 8px/6px "Liberation Sans", Arial, sans-serif; text-align: center; }
.canvas { position: relative; flex: 1; min-width: 0; background: #fff; overflow: hidden; }
.scene { position: absolute; inset: 0; width: 100%; height: 100%; }
.docwin { position: absolute; right: 2px; top: 5px; display: flex; gap: 4px; }
.docwin button { width: 12px; }
.docwin svg { width: 12px; height: 12px; }
.cube { position: absolute; right: 29px; top: 48px; width: 44px; height: 44px; border: 1px solid #858585; background: linear-gradient(#ececee, #cfcfd2); box-shadow: 0 4px 3px -1px #bbb; color: #8f8f98; font: bold 9px/12px "Liberation Sans", Arial, sans-serif; }
.navbar { position: absolute; right: 2px; top: 117px; width: 28px; height: 158px; border: 1px solid #aaa; border-radius: 5px; background: #f3f3f3; }
.navbar .full { width: 100%; height: 100%; }
.triad { position: absolute; left: 32px; bottom: 30px; width: 44px; height: 44px; font: 9px "Liberation Sans", Arial, sans-serif; }

/* Status bar */
.status { display: flex; align-items: center; height: 15px; flex: none; padding: 0 14px 0 1px; background: linear-gradient(#f8f8f6, #c9c8c0 80%, #aaa99f); color: #111; }
.coords { margin-left: auto; }
.cell { min-width: 30px; padding-left: 5px; }
.c-full { padding-right: 3px; }
.meter { width: 15px; height: 11px; background: linear-gradient(90deg, #1a8c22 5px, #222 5px); }

/* Taskbar */
.taskbar { display: flex; align-items: stretch; height: 23px; flex: none; background: linear-gradient(#3f83f0, #245edb 4px, #2258d4 19px, #1b46b0); color: #fff; }
.start { display: flex; align-items: center; gap: 3px; width: 77px; padding-left: 8px; background: linear-gradient(#5db85a, #379339 5px, #2f8a31 18px, #1f6a22); border-radius: 0 9px 9px 0; font: italic bold 14px/20px "Liberation Sans", Arial, sans-serif; color: #fff; box-shadow: 1px 0 2px #123c8c; }
.start svg { width: 16px; height: 16px; }
.launch { display: flex; align-items: center; gap: 5px; width: 170px; padding-left: 9px; }
.tasks { display: flex; flex: 1; gap: 1px; padding-top: 2px; }
.tasks button { display: flex; align-items: center; gap: 2px; width: 127px; height: 19px; padding-left: 6px; border-radius: 2px; background: linear-gradient(#5c9cf8, #3b7bee 4px, #3672e6); }
.tasks .cur { background: #1d4cae; }
.tray { display: flex; align-items: center; gap: 2px; width: 139px; padding: 0 14px 0 1px; background: linear-gradient(90deg, transparent 7px, #1590ea 8px); }
.tray svg { width: 12px; height: 12px; }
.tray .chev svg { width: 14px; height: 14px; }
.tray time { margin-left: auto; white-space: nowrap; }
```
